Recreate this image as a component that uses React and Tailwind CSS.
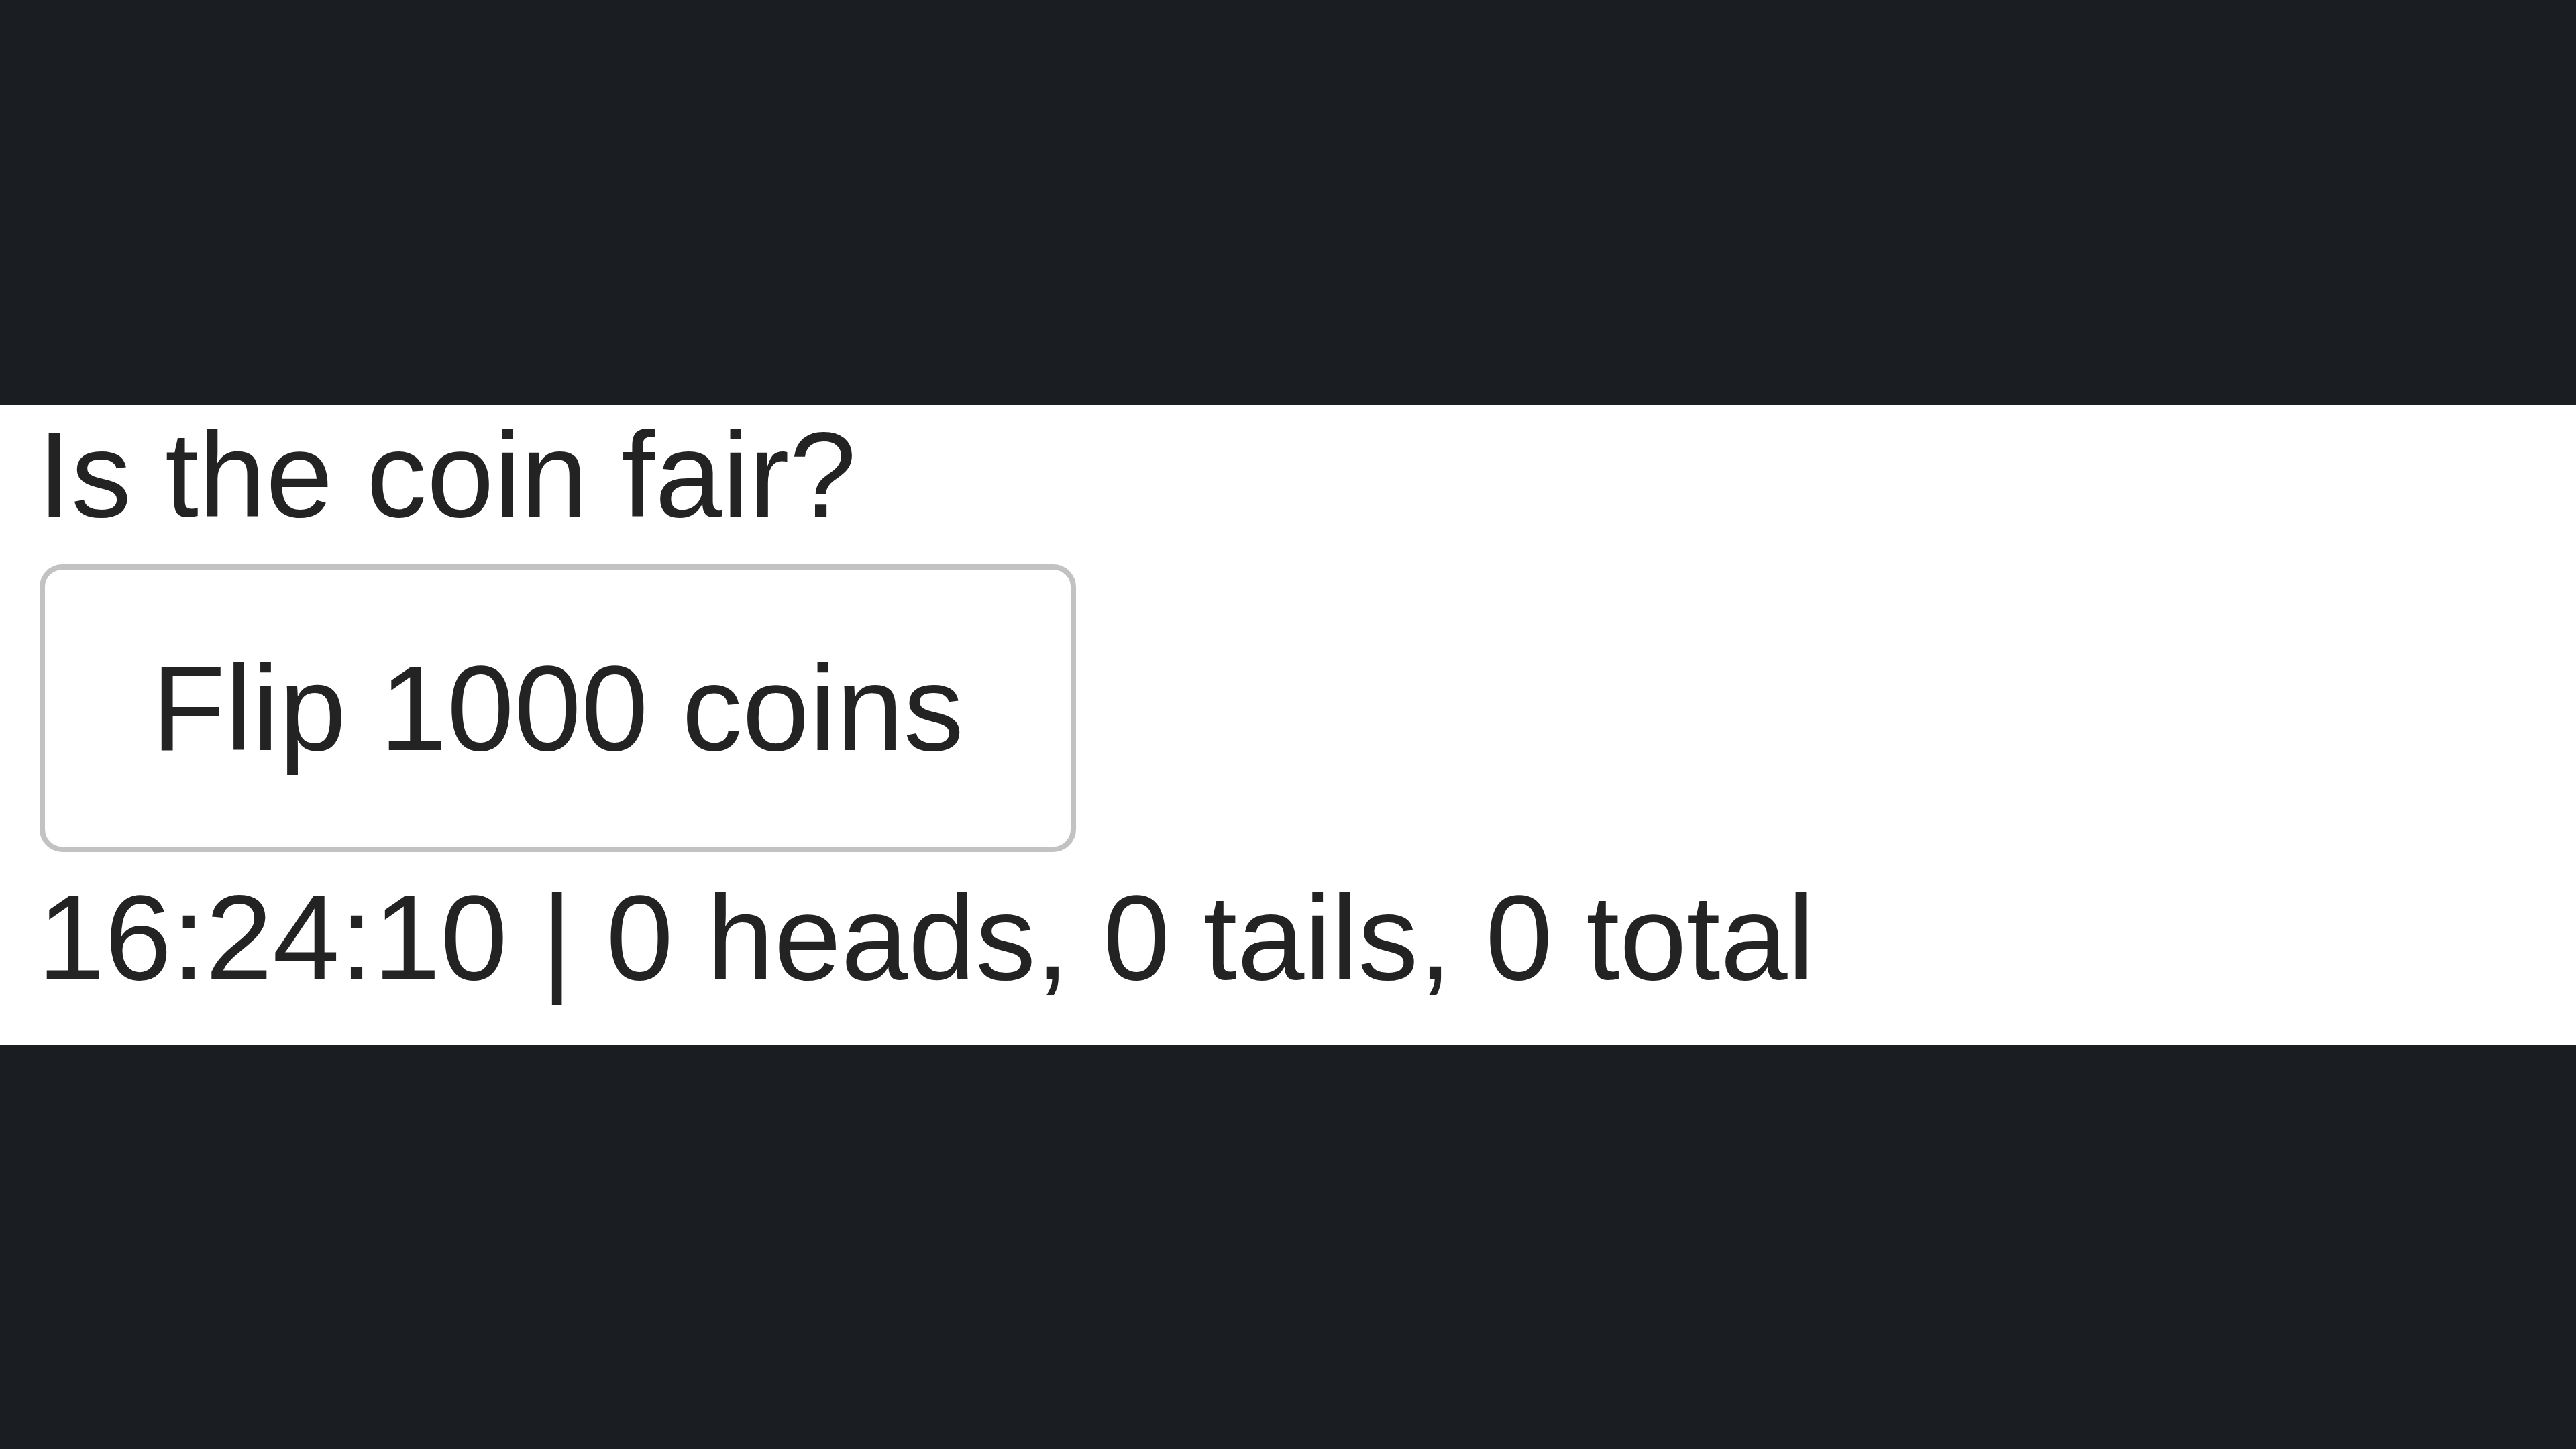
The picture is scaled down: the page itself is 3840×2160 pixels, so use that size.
import React from 'react';

export default function App() {
    return (
        <div className="flex items-center w-full h-screen bg-[#1a1d21]">
            {/* Embedded widget panel */}
            <div
                className="w-full bg-white text-[#232323] pl-[56px] pr-[44px] pt-[4px] pb-[60px] text-[180px] leading-[201px]"
                style={{ fontFamily: '"Liberation Sans", Arial, Helvetica, sans-serif' }}
            >
                <div>Is the coin fair?</div>
                <button className="mt-[33px] ml-[3px] px-[159px] py-[106px] bg-white border-[8px] border-[#c2c2c2] rounded-[34px] leading-[201px] cursor-pointer">
                    Flip 1000 coins
                </button>
                <div className="mt-[27px]">16:24:10 | 0 heads, 0 tails, 0 total</div>
            </div>
        </div>
    );
}
